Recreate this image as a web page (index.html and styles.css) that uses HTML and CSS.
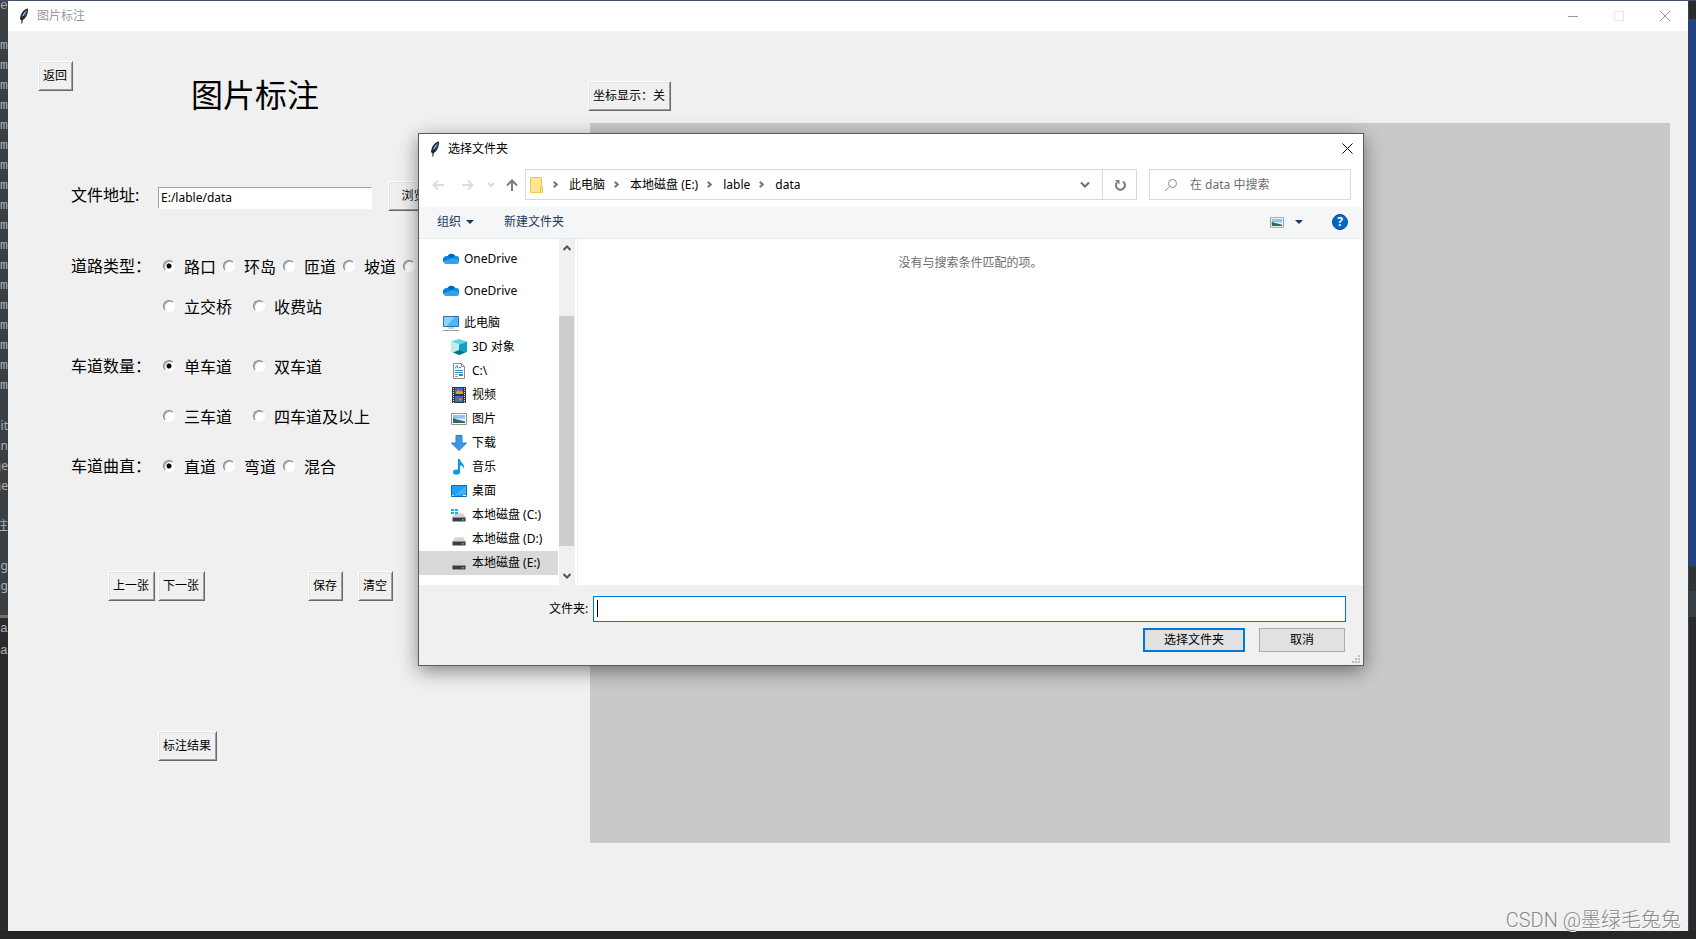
FILE: index.html
```
<!DOCTYPE html>
<html lang="zh-CN">
	<head>
		<meta charset="utf-8" />
		<title>图片标注</title>
		<link rel="stylesheet" href="styles.css">
	</head>
	<body>
		<!-- 公用图标 -->
		<svg class="defs" width="0" height="0">
			<symbol id="feather" viewBox="0 0 10 16">
				<path d="M9 0.5C5 1 1.5 5 1 11l1.500 1.500C6.500 11 9 7 9 0.500z" fill="#20242c"/>
				<path d="M8 2C5 3.500 3.500 6.500 3 10.500 6 9 7.500 6 8 2z" fill="#4c8ad8"/>
				<path d="M7 3L3.200 12 2.800 15.500" stroke="#111" fill="none"/>
				<path d="M6.500 3.500L4 8" stroke="#b9d8fa" fill="none"/>
			</symbol>
			<symbol id="cloud" viewBox="0 1 16 16">
				<path d="M4 7.500a4.500 4.500 0 0 1 8.300-1.500L9 10z" fill="#0364b8"/>
				<path d="M4 6A4 4 0 0 0 .5 12.300L9 8.500 8 7a6 6 0 0 0-4-1z" fill="#0f7bd6"/>
				<path d="M9 8.500l3-2.500A3.600 3.600 0 0 1 16 11.500z" fill="#1490df"/>
				<path d="M.8 12.500L9 8l6.900 3.500a2 2 0 0 1-2 2.500H3.500a3 3 0 0 1-2.700-1.500z" fill="#28a8ea"/>
			</symbol>
			<symbol id="disk" viewBox="0 0 16 16">
				<path d="M3.500 6.500h9l2 4h-13z" fill="#d2d4d6"/>
				<path d="M1.500 10.500h13v4h-13z" fill="#3c3f42"/>
				<path d="M1.500 10.500h13" stroke="#8b8e91"/>
				<path d="M11 12h1.500v1.500H11z" fill="#4fe04f"/>
			</symbol>
			<symbol id="photo" viewBox="0 0 16 12">
				<path d="M.5.500h15v11H.5z" fill="#fff" stroke="#8f9296"/>
				<path d="M2 2h12v4H2z" fill="#8fc2f3"/>
				<path d="M2 5.500h12V8H2z" fill="#d8ecf7"/>
				<path d="M2 5l4 1.500 8 2V10H2z" fill="#33685c"/>
			</symbol>
		</svg>

		<!-- 后面的编辑器 -->
		<div class="editor-left">
			<pre class="code">e

m
m
m
m
m
m
m
m
m
m
m
m
m
m
m
m
m
m
</pre>
			<pre class="words">it
in
ge
ge

注

ng
ng</pre>
			<pre class="console">a
a</pre>
		</div>

		<div class="window">
			<div class="titlebar">
				<svg class="feather"><use href="#feather"/></svg>
				<span class="caption">图片标注</span>
				<button class="winbtn" aria-label="最小化"><svg width="10" height="10"><path d="M0 5.500h10" stroke="#999"/></svg></button>
				<button class="winbtn" aria-label="最大化" disabled><svg width="10" height="10"><path d="M.5.500h9v9h-9z" fill="none" stroke="#e6e6e6"/></svg></button>
				<button class="winbtn" aria-label="关闭"><svg width="10" height="10"><path d="M0 0l10 10M10 0L0 10" stroke="#999"/></svg></button>
			</div>

			<div class="content">
				<form class="panel">
					<div class="head">
						<button type="button" class="tkbtn">返回</button>
						<h1>图片标注</h1>
					</div>

					<div class="row path">
						<label for="txtPath">文件地址:</label>
						<input type="text" id="txtPath" value="E:/lable/data" />
						<button type="button" class="tkbtn browse">浏览</button>
					</div>

					<fieldset class="row road" aria-labelledby="lblRoad">
						<span class="name" id="lblRoad">道路类型：</span>
						<div class="options">
							<div class="line short">
								<label><input type="radio" name="road" checked />路口</label>
								<label><input type="radio" name="road" />环岛</label>
								<label><input type="radio" name="road" />匝道</label>
								<label><input type="radio" name="road" />坡道</label>
								<label><input type="radio" name="road" aria-label="其他" /></label>
							</div>
							<div class="line">
								<label><input type="radio" name="road" />立交桥</label>
								<label><input type="radio" name="road" />收费站</label>
							</div>
						</div>
					</fieldset>

					<fieldset class="row lane" aria-labelledby="lblLane">
						<span class="name" id="lblLane">车道数量：</span>
						<div class="options">
							<div class="line">
								<label><input type="radio" name="lane" checked />单车道</label>
								<label><input type="radio" name="lane" />双车道</label>
							</div>
							<div class="line">
								<label><input type="radio" name="lane" />三车道</label>
								<label><input type="radio" name="lane" />四车道及以上</label>
							</div>
						</div>
					</fieldset>

					<fieldset class="row lane" aria-labelledby="lblCurve">
						<span class="name" id="lblCurve">车道曲直：</span>
						<div class="options">
							<div class="line short">
								<label><input type="radio" name="curve" checked />直道</label>
								<label><input type="radio" name="curve" />弯道</label>
								<label><input type="radio" name="curve" />混合</label>
							</div>
						</div>
					</fieldset>

					<div class="actions">
						<div class="pager">
							<button type="button" class="tkbtn">上一张</button>
							<button type="button" class="tkbtn">下一张</button>
						</div>
						<div class="save">
							<button type="button" class="tkbtn">保存</button>
							<button type="button" class="tkbtn">清空</button>
						</div>
					</div>

					<button type="button" class="tkbtn result">标注结果</button>
				</form>

				<div class="stage">
					<button type="button" class="tkbtn">坐标显示：关</button>
					<div class="canvas"></div>
				</div>
			</div>
		</div>

		<div class="editor-right"></div>

		<!-- 选择文件夹对话框 -->
		<div class="dialog" role="dialog" aria-label="选择文件夹">
			<div class="dlg-title">
				<svg class="feather"><use href="#feather"/></svg>
				<span>选择文件夹</span>
				<button class="close" aria-label="关闭"><svg width="11" height="11"><path d="M.5.500l10 10M10.500.500l-10 10" stroke="#000"/></svg></button>
			</div>

			<div class="address">
				<div class="arrows">
					<button aria-label="后退"><svg width="12" height="12"><path d="M12 6H1.500M6 1.500L1.500 6 6 10.500" stroke="#dcdcdc" stroke-width="2" fill="none"/></svg></button>
					<button aria-label="前进"><svg width="12" height="12"><path d="M0 6h10.500M6 1.500L10.500 6 6 10.500" stroke="#dcdcdc" stroke-width="2" fill="none"/></svg></button>
					<button aria-label="最近"><svg width="8" height="12"><path d="M1 4l3 3 3-3" stroke="#dcdcdc" stroke-width="2" fill="none"/></svg></button>
					<button aria-label="上移"><svg width="12" height="12"><path d="M6 12V1.500M1 6.500l5-5 5 5" stroke="#7c7c7c" stroke-width="2" fill="none"/></svg></button>
				</div>
				<div class="crumbs">
					<svg width="14" height="16"><path d="M.5.500h11v15H.5z" fill="#ffe594" stroke="#eec84e"/><path d="M10.500 9.500h2v6h-2z" fill="#ffe594" stroke="#eec84e"/></svg>
					<i></i><a href="#">此电脑</a>
					<i></i><a href="#">本地磁盘 (E:)</a>
					<i></i><a href="#">lable</a>
					<i></i><a href="#">data</a>
					<button class="drop" aria-label="展开"><svg width="10" height="8"><path d="M1 1.500l4 4 4-4" stroke="#6e6e6e" stroke-width="2" fill="none"/></svg></button>
					<button class="refresh" aria-label="刷新"><svg width="12" height="12"><path d="M9 2.500A4.500 4.500 0 1 1 3 3.300" stroke="#7a7a7a" stroke-width="2" fill="none"/><path d="M1 1h4.500v4.500z" fill="#7a7a7a"/></svg></button>
				</div>
				<div class="search">
					<svg width="14" height="14"><circle cx="8.500" cy="5.500" r="4" fill="none" stroke="#8a8a8a"/><path d="M5.500 8.500L1 13" stroke="#8a8a8a"/></svg>
					<input type="text" placeholder="在 data 中搜索" aria-label="搜索" />
				</div>
			</div>

			<div class="toolbar">
				<button class="menu">组织<b></b></button>
				<button>新建文件夹</button>
				<button class="menu view" aria-label="视图"><svg width="14" height="11"><use href="#photo" width="14" height="11"/></svg><b></b></button>
				<button class="help" aria-label="帮助">?</button>
			</div>

			<div class="browser">
				<ul class="tree">
					<li class="top"><svg><use href="#cloud"/></svg>OneDrive</li>
					<li class="top"><svg><use href="#cloud"/></svg>OneDrive</li>
					<li class="top"><svg viewBox="0 0 16 16"><path d="M.5 1.500h15v10H.5z" fill="#4db8fa" stroke="#2e75a8"/><path d="M1 2h10l-7 9H1z" fill="#8bd3ff"/><path d="M5 13h6M0 15.500h16" stroke="#8fa4b4"/></svg>此电脑</li>
					<li><svg viewBox="0 0 16 16"><path d="M8 0l8 2.500-8 3-8-3z" fill="#61d4e2"/><path d="M0 2.500l8 3V16l-8-3z" fill="#bfeef2"/><path d="M16 2.500l-8 3V16l8-3z" fill="#12a2c6"/><path d="M8 11l6 2.500L8 16l-6-2.500z" fill="#087487"/></svg>3D 对象</li>
					<li><svg viewBox="0 0 16 16"><path d="M2.500.500h8l3 3v12h-11z" fill="#fff" stroke="#8a8d90"/><path d="M10.500.500v3h3" fill="none" stroke="#8a8d90"/><path d="M4 5.500l2-3 1 3M8 4.500h2M4 7.500h8M4 9.500h8" stroke="#2f8fd3" fill="none"/><path d="M4 11.500h3M4 13.500h3" stroke="#999"/><path d="M8 11h4v2H8z" fill="#3c8aa8"/></svg>C:\</li>
					<li><svg viewBox="0 0 16 16"><path d="M1 0h14v16H1z" fill="#333"/><path d="M2.500 1v15M13.500 1v15" stroke="#e8e8e8" stroke-dasharray="1 1"/><path d="M4 1h8v6H4zM4 9h8v6H4z" fill="#3b6ec4"/><path d="M5 5l3-2 4 2v2H5zM8 11l3 1-2 2z" fill="#d5a72c"/><path d="M8 2h2v2H8zM9 11h2v1H9z" fill="#cf4332"/></svg>视频</li>
					<li><svg viewBox="0 0 16 16"><use href="#photo" y="2" width="16" height="12"/></svg>图片</li>
					<li><svg viewBox="0 0 16 16"><path d="M5 .5h6V8h4.500L8 15.500.500 8H5z" fill="#3f97e4" stroke="#2b7fcb"/></svg>下载</li>
					<li><svg viewBox="0 0 16 16"><ellipse cx="5.500" cy="13" rx="3.500" ry="2.600" fill="#0d94ee"/><path d="M7 0h2c0 4 5 4 4 10-.5-2.500-2-3.500-4-3.500V13H7z" fill="#0d94ee"/></svg>音乐</li>
					<li><svg viewBox="0 0 16 16"><path d="M.5 2.500h15v11H.5z" fill="#1ba0fb" stroke="#0a6fb9"/><path d="M15 3v8L4 12z" fill="#43b1fc"/><path d="M1 12.500h1.500M12 12.500h3" stroke="#fff"/></svg>桌面</li>
					<li><svg viewBox="0 0 16 16"><use href="#disk"/><path d="M0 2h3v2H0zM4 2h3v2H4zM0 5h3v2H0zM4 5h3v2H4z" fill="#12b5ea"/></svg>本地磁盘 (C:)</li>
					<li><svg viewBox="0 0 16 16"><use href="#disk"/></svg>本地磁盘 (D:)</li>
					<li class="on"><svg viewBox="0 0 16 16"><use href="#disk"/></svg>本地磁盘 (E:)</li>
				</ul>
				<div class="scroll">
					<svg width="8" height="8"><path d="M.5 6L4 2.500 7.500 6" stroke="#555" stroke-width="2" fill="none"/></svg>
					<div class="thumb"></div>
					<svg width="8" height="8"><path d="M.5 2L4 5.500 7.500 2" stroke="#555" stroke-width="2" fill="none"/></svg>
				</div>
				<div class="files">没有与搜索条件匹配的项。</div>
			</div>

			<div class="footer">
				<div class="folder">
					<label for="txtFolder">文件夹:</label>
					<input type="text" id="txtFolder" />
				</div>
				<div class="buttons">
					<button class="ok">选择文件夹</button>
					<button class="cancel">取消</button>
				</div>
				<svg class="grip" width="8" height="8"><path d="M6 0h2v2H6zM3 3h2v2H3zM6 3h2v2H6zM0 6h2v2H0zM3 6h2v2H3zM6 6h2v2H6z" fill="#bdbdbd"/></svg>
			</div>
		</div>

		<div class="watermark">CSDN @墨绿毛兔兔</div>
	</body>
</html>
```

FILE: styles.css
```
* {
    box-sizing: border-box;
}

body {
    margin: 0;
    min-height: 100vh;
    padding: 1px 0 8px;
    display: grid;
    grid-template-columns: 8px 1fr 8px;
    position: relative;
    overflow: hidden;
    background: linear-gradient(#424c6e 1px, #262626 1px);
    font: 12px/16px "Noto Sans", "Noto Sans CJK SC", sans-serif;
    color: #000;
}

button, input {
    font: inherit;
    color: inherit;
}

button {
    margin: 0;
    padding: 0;
    border: 0;
    background: none;
}

.defs {
    position: absolute;
}

/*--- 编辑器边缘 ---*/
.editor-left {
    background: linear-gradient(#3c3f41 614px, #6b6f73 614px, #6b6f73 617px, #2b2b2b 617px);
    color: #a9b1b8;
    overflow: hidden;
}

.editor-left pre {
    margin: 0;
    font: 13px/20px "Liberation Mono", "Noto Sans CJK SC", monospace;
}

.editor-left .code {
    margin-top: -5px;
}

/* 只露出单词的末尾 */
.editor-left .words {
    margin-top: 20px;
    font: 12px/20px "Noto Sans", "Noto Sans CJK SC", sans-serif;
    direction: rtl;
}

.editor-left .console {
    margin-top: 22px;
    line-height: 22px;
}

.editor-right {
    border-left: 1px solid #34405c;
    background: linear-gradient(#2b2b2b 18px, #214283 18px, #214283 565px, #313335 565px, #313335 590px, #3b4042 590px, #3b4042 616px, #2b2b2b 616px);
}

/*--- 主窗口 ---*/
.window {
    background: #f0f0f0;
    display: flex;
    flex-direction: column;
    min-width: 0;
}

.titlebar {
    height: 30px;
    background: #fff;
    display: flex;
    align-items: center;
    padding-left: 11px;
    color: #999;
}

.feather {
    width: 10px;
    height: 16px;
    margin-right: 8px;
}

.caption {
    flex: 1;
}

.winbtn {
    width: 46px;
    height: 30px;
}

.winbtn svg {
    display: block;
    margin: auto;
}

.content {
    flex: 1;
    display: flex;
}

.panel {
    width: 580px;
    flex: none;
}

.tkbtn {
    height: 30px;
    padding: 0 5px 0 4px;
    background: #f0f0f0;
    border: 1px solid;
    border-color: #fff #696969 #696969 #fff;
    box-shadow: inset 1px 1px #e3e3e3, inset -1px -1px #a0a0a0;
    white-space: nowrap;
}

.head {
    display: flex;
    align-items: flex-start;
    gap: 118px;
    padding: 30px 0 0 30px;
}

h1 {
    margin: 10px 0 0;
    font-size: 32px;
    line-height: 48px;
    font-weight: normal;
}

.row {
    display: flex;
    margin: 0;
    border: 0;
    padding: 0 0 0 63px;
    font-size: 16px;
}

.path {
    align-items: center;
    margin-top: 62px;
    height: 30px;
}

.path label {
    width: 87px;
    padding-bottom: 2px;
}

.path input {
    width: 214px;
    height: 22px;
    margin: 3px 16px 0 0;
    padding: 0 2px;
    border: 1px solid;
    border-color: #a0a0a0 #fff #fff #a0a0a0;
    border-radius: 0;
    background: #fff;
    font-size: 12px;
}

.browse {
    width: 52px;
    font-size: 12px;
}

.name {
    width: 92px;
    line-height: 38px;
}

.road {
    margin: 36px 0 15px;
}

.line {
    display: flex;
    height: 40px;
}

.line label {
    display: flex;
    align-items: center;
    width: 90px;
    white-space: nowrap;
}

.short label {
    width: 60px;
}

.lane .line {
    height: 50px;
}

.lane .name {
    line-height: 48px;
}

.line input {
    appearance: none;
    flex: none;
    width: 12px;
    height: 12px;
    margin: 0 9px 2px 0;
    border: 1px solid;
    border-color: #808080 #fff #fff #808080;
    border-radius: 50%;
    background: #fff;
    box-shadow: inset 1px 1px #b0b0b0;
}

.line input:checked {
    background: radial-gradient(circle, #000 2px, #fff 3px);
}

.actions {
    display: flex;
    gap: 103px;
    padding: 79px 0 0 100px;
}

.pager {
    display: flex;
    gap: 3px;
}

.save {
    display: flex;
    gap: 15px;
}

.result {
    margin: 130px 0 0 150px;
}

.stage {
    flex: 1;
    display: flex;
    flex-direction: column;
    align-items: flex-start;
    padding: 50px 18px 88px 0;
}

.canvas {
    flex: 1;
    align-self: stretch;
    margin: 12px 0 0 2px;
    background: #c9c9c9;
}

/*--- 对话框 ---*/
.dialog {
    position: absolute;
    left: 418px;
    top: 133px;
    width: 946px;
    border: 1px solid #5c5c5c;
    background: #fff;
    box-shadow: 0 5px 18px rgba(0, 0, 0, 0.45);
}

.dlg-title {
    display: flex;
    align-items: center;
    height: 30px;
    padding: 0 10px 0 11px;
}

.close {
    align-self: flex-start;
    margin-left: auto;
    height: 28px;
}

.close svg {
    display: block;
}

.address {
    display: flex;
    height: 43px;
    padding: 5px 12px 7px 13px;
}

.arrows {
    width: 93px;
    display: flex;
    align-items: center;
}

.arrows button {
    width: 12px;
    margin-right: 18px;
}

.arrows button:nth-child(2) {
    margin-right: 13px;
}

.arrows button:nth-child(3) {
    width: 8px;
    margin-right: 11px;
}

.arrows button:last-child {
    margin-right: 0;
}

.arrows svg {
    display: block;
}

.crumbs {
    flex: 1;
    display: flex;
    align-items: center;
    margin-right: 12px;
    padding-left: 4px;
    border: 1px solid #d9d9d9;
}

.crumbs a {
    color: #000;
    text-decoration: none;
    white-space: nowrap;
}

.crumbs i {
    width: 5px;
    height: 5px;
    margin: 0 12px 0 8px;
    border: solid #777;
    border-width: 2px 2px 0 0;
    transform: rotate(45deg);
}

.drop {
    margin: 0 12px 0 auto;
}

.refresh {
    width: 34px;
    height: 100%;
    border-left: 1px solid #d9d9d9;
}

.drop svg, .refresh svg {
    display: block;
    margin: auto;
}

.search {
    width: 202px;
    display: flex;
    align-items: center;
    gap: 12px;
    padding-left: 14px;
    border: 1px solid #d9d9d9;
}

.search input {
    flex: 1;
    min-width: 0;
    border: 0;
    padding: 0;
    outline: 0;
}

.search input::placeholder {
    color: #6d6d6d;
}

.toolbar {
    height: 32px;
    display: flex;
    align-items: center;
    padding: 0 15px 1px 18px;
    background: #f5f6f7;
    border-bottom: 1px solid #e8e8e8;
    color: #1e395b;
}

.menu {
    display: flex;
    align-items: center;
    gap: 5px;
    margin-right: 30px;
}

.menu b {
    border: 4px solid transparent;
    border-top-color: #1e395b;
    border-bottom: 0;
}

.view {
    gap: 11px;
    margin: 0 29px 0 auto;
}

.help {
    width: 16px;
    height: 16px;
    border: 1px solid #0a4d94;
    border-radius: 50%;
    background: #0066cc;
    color: #fff;
    font-weight: bold;
    line-height: 14px;
}

.browser {
    display: flex;
}

.tree {
    width: 140px;
    margin: 0;
    padding: 0 1px 10px 0;
    list-style: none;
}

.tree li {
    display: flex;
    align-items: center;
    gap: 5px;
    height: 24px;
    padding-left: 32px;
    white-space: nowrap;
}

.tree .top {
    margin-top: 8px;
    padding-left: 24px;
}

.tree .on {
    background: #d9d9d9;
}

.tree svg {
    flex: none;
    width: 16px;
    height: 16px;
}

.scroll {
    width: 16px;
    display: flex;
    flex-direction: column;
    align-items: center;
    padding: 5px 0;
    background: #f0f0f0;
}

.scroll svg {
    flex: none;
}

.thumb {
    width: 100%;
    height: 230px;
    margin: 64px 0 auto;
    border-right: 1px solid #f0f0f0;
    background: #cdcdcd;
}

.files {
    flex: 1;
    margin-left: 2px;
    padding-top: 16px;
    border-left: 1px solid #f0f0f0;
    text-align: center;
    color: #6d6d6d;
}

.footer {
    position: relative;
    padding: 11px 17px 13px 130px;
    background: #f0f0f0;
}

.folder {
    display: flex;
    align-items: center;
}

.folder label {
    width: 44px;
}

/* 左侧的竖线是光标 */
.folder input {
    flex: 1;
    height: 26px;
    padding: 0 3px;
    border: 1px solid #0078d7;
    outline: 0;
    background: linear-gradient(#000, #000) 3px 3px / 1px 17px no-repeat #fff;
}

.buttons {
    display: flex;
    justify-content: flex-end;
    gap: 14px;
    margin-top: 6px;
    padding-right: 1px;
}

.buttons button {
    width: 86px;
    height: 24px;
    border: 1px solid #adadad;
    background: #e1e1e1;
}

.buttons .ok {
    width: 102px;
    border: 2px solid #0078d7;
}

.grip {
    position: absolute;
    right: 3px;
    bottom: 2px;
}

.watermark {
    position: absolute;
    right: 15px;
    bottom: 6px;
    font: 20px/26px Roboto, "Noto Sans CJK SC", sans-serif;
    font-weight: 300;
    color: #888;
    text-shadow: 1px 1px #fff;
}
```
